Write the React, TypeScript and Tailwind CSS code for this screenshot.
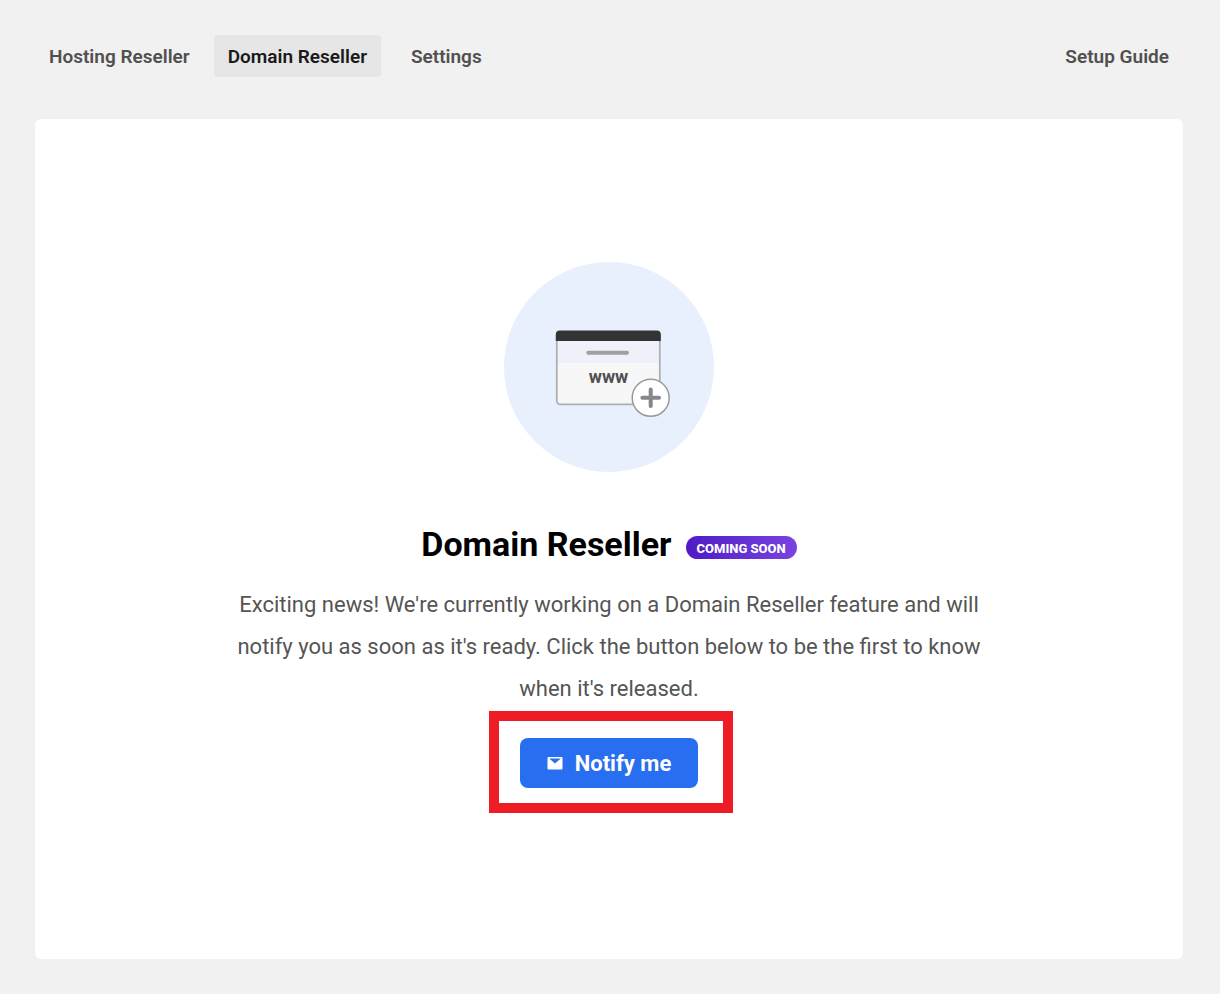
import clsx from "clsx";

type Tab = {
  label: string;
  href: string;
  active?: boolean;
};

const tabs: Tab[] = [
  { label: "Hosting Reseller", href: "#hosting" },
  { label: "Domain Reseller", href: "#domain", active: true },
  { label: "Settings", href: "#settings" },
];

const TabLink = ({ label, href, active }: Tab) => (
  <a
    href={href}
    aria-current={active ? "page" : undefined}
    className={clsx(
      "rounded px-3.5 pt-[9px] pb-[7px] text-[19px] leading-[26px] font-semibold",
      active ? "mr-1.5 bg-[#e6e6e6] text-[#1a1a1a]" : "text-[#505050]"
    )}
  >
    {label}
  </a>
);

const DomainIllustration = () => (
  <svg
    viewBox="0 0 210 210"
    className="size-[210px]"
    role="img"
    aria-label="New domain"
  >
    <circle cx="105" cy="105" r="105" fill="#e8f0fe" />
    <rect x="53" y="70" width="103" height="72" rx="3.500" fill="#f7f7f7" />
    <rect x="53" y="78" width="103" height="23" fill="#eef1f9" />
    <rect
      x="52.800"
      y="70"
      width="103"
      height="72.300"
      rx="3.500"
      fill="none"
      stroke="#adafb3"
      strokeWidth="1.800"
    />
    <path
      d="M51.800 79V72.500a4 4 0 0 1 4-4h97a4 4 0 0 1 4 4v6.500z"
      fill="#333333"
    />
    <path
      d="M84.300 90.700h38.700"
      stroke="#a0a0a2"
      strokeWidth="4"
      strokeLinecap="round"
    />
    <text
      x="104.500"
      y="121"
      textAnchor="middle"
      fontSize="18"
      fontWeight="700"
      fill="#505050"
    >
      www
    </text>
    <circle
      cx="146.700"
      cy="135.800"
      r="18.500"
      fill="#ffffff"
      stroke="#98999c"
      strokeWidth="1.500"
    />
    <path
      d="M146.700 127.500v16.600M138.400 135.800h16.600"
      stroke="#85878a"
      strokeWidth="4"
      strokeLinecap="round"
    />
  </svg>
);

const MailIcon = () => (
  <svg viewBox="0 0 16 13" className="h-[13px] w-4" aria-hidden="true">
    <rect x="0.500" y="0" width="15" height="12.500" rx="1" fill="#ffffff" />
    <path d="M2.200 1.600h11.600L8 6.400z" fill="#276ef1" />
  </svg>
);

const App = () => {
  return (
    <div className="min-h-screen bg-[#f1f1f1] py-[35px] pr-[37px] pl-[35px] font-[Roboto,sans-serif]">
      <nav className="flex items-center justify-between">
        <div className="flex items-center gap-2.5">
          {tabs.map((tab) => (
            <TabLink key={tab.label} {...tab} />
          ))}
        </div>
        <TabLink label="Setup Guide" href="#guide" />
      </nav>

      <main className="mt-[42px] flex flex-col items-center rounded-md bg-white px-6 pt-[143px] pb-[171px]">
        <DomainIllustration />

        <div className="mt-[49px] flex items-center gap-3.5">
          <h1 className="text-[34px] leading-[46px] font-bold text-black">
            Domain Reseller
          </h1>
          <span className="mt-[7px] rounded-full bg-linear-to-r from-[#5019c5] to-[#7843e0] px-[11px] pt-0.5 text-[13px] leading-[21px] font-extrabold text-white">
            COMING SOON
          </span>
        </div>

        <p className="mt-[17px] max-w-[760px] text-center text-[22px] leading-[42px] text-[#555555]">
          Exciting news! We're currently working on a Domain Reseller feature
          and will notify you as soon as it's ready. Click the button below to
          be the first to know when it's released.
        </p>

        <div className="relative mt-7">
          <button
            type="button"
            className="flex h-[50px] items-center gap-3 rounded-lg bg-[#276ef1] px-[27px] text-[22px] font-bold text-white"
          >
            <MailIcon />
            Notify me
          </button>
          {/* highlight frame around the call to action */}
          <div className="pointer-events-none absolute -top-[27px] -right-[35px] -bottom-[25px] -left-[31px] border-[10px] border-[#ee1c25]" />
        </div>
      </main>
    </div>
  );
};

export default App;
